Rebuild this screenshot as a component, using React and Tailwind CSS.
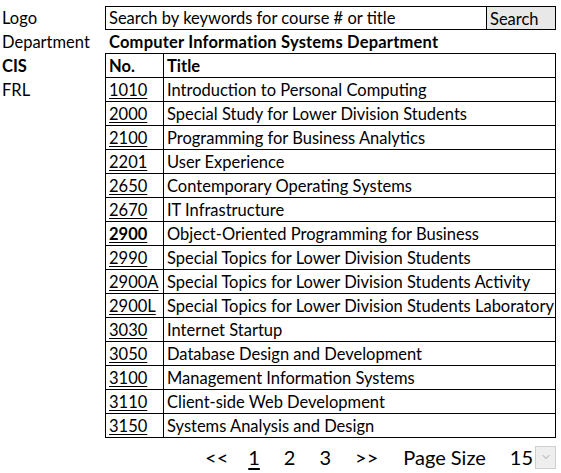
import { ChevronDown } from 'lucide-react';

const courses = [
    { no: '1010', title: 'Introduction to Personal Computing' },
    { no: '2000', title: 'Special Study for Lower Division Students' },
    { no: '2100', title: 'Programming for Business Analytics' },
    { no: '2201', title: 'User Experience' },
    { no: '2650', title: 'Contemporary Operating Systems' },
    { no: '2670', title: 'IT Infrastructure' },
    { no: '2900', title: 'Object-Oriented Programming for Business', current: true },
    { no: '2990', title: 'Special Topics for Lower Division Students' },
    { no: '2900A', title: 'Special Topics for Lower Division Students Activity' },
    { no: '2900L', title: 'Special Topics for Lower Division Students Laboratory' },
    { no: '3030', title: 'Internet Startup' },
    { no: '3050', title: 'Database Design and Development' },
    { no: '3100', title: 'Management Information Systems' },
    { no: '3110', title: 'Client-side Web Development' },
    { no: '3150', title: 'Systems Analysis and Design' },
];

const App = () => {
    return (
        <div className="w-[561px] h-[473px] bg-white text-black text-[16.5px] font-['Lato','Liberation_Sans',sans-serif] overflow-hidden">
            <div className="flex pt-[6px]">
                {/* side nav */}
                <div className="w-[105px] shrink-0 pl-[2px]">
                    <div className="h-6 leading-6">Logo</div>
                    <div className="h-6 leading-6">Department</div>
                    <div className="h-6 leading-6 font-bold">CIS</div>
                    <div className="h-6 leading-6">FRL</div>
                </div>

                <div className="w-[451px]">
                    <div className="flex h-6">
                        <input
                            className="flex-1 min-w-0 h-6 border border-black px-[3px] outline-none placeholder:text-black"
                            placeholder="Search by keywords for course # or title"
                        />
                        <button className="w-[69px] h-6 border border-l-0 border-black bg-[#e8e8e8] text-left pl-[3px]">
                            Search
                        </button>
                    </div>

                    <div className="h-6 leading-6 pl-[4px] font-bold tracking-[0.2px]">Computer Information Systems Department</div>

                    <table className="w-full border-collapse -mt-px">
                        <thead>
                            <tr className="h-6">
                                <th className="w-[58px] border border-black text-left font-bold pl-[3px] py-0 leading-[22px]">No.</th>
                                <th className="border border-black text-left font-bold pl-[3px] py-0 leading-[22px]">Title</th>
                            </tr>
                        </thead>
                        <tbody>
                            {courses.map((c) => (
                                <tr key={c.no} className="h-6">
                                    <td className={`border border-black pl-[3px] py-0 leading-[22px] ${c.current ? 'font-bold' : ''}`}>
                                        <a href="#" className="underline underline-offset-2">{c.no}</a>
                                    </td>
                                    <td className="border border-black pl-[3px] py-0 leading-[22px] whitespace-nowrap max-w-0 overflow-visible">
                                        {c.title}
                                    </td>
                                </tr>
                            ))}
                        </tbody>
                    </table>

                    <div className="flex items-center justify-end h-[24px] mt-[7px] text-[20px]">
                        <span>&lt;&lt;</span>
                        <a href="#" className="ml-[20px] underline underline-offset-[3px]">1</a>
                        <span className="ml-[24px]">2</span>
                        <span className="ml-[24px]">3</span>
                        <span className="ml-[24px]">&gt;&gt;</span>
                        <span className="ml-[25px]">Page Size</span>
                        <span className="ml-[24px]">15</span>
                        <span className="ml-[2px] w-[21px] h-[23px] border border-[#cfcfcf] bg-[#eeeeee] flex items-center justify-center">
                            <ChevronDown size={12} strokeWidth={2} className="text-[#a0a0a0]" />
                        </span>
                    </div>
                </div>
            </div>
        </div>
    );
};

export default App;
